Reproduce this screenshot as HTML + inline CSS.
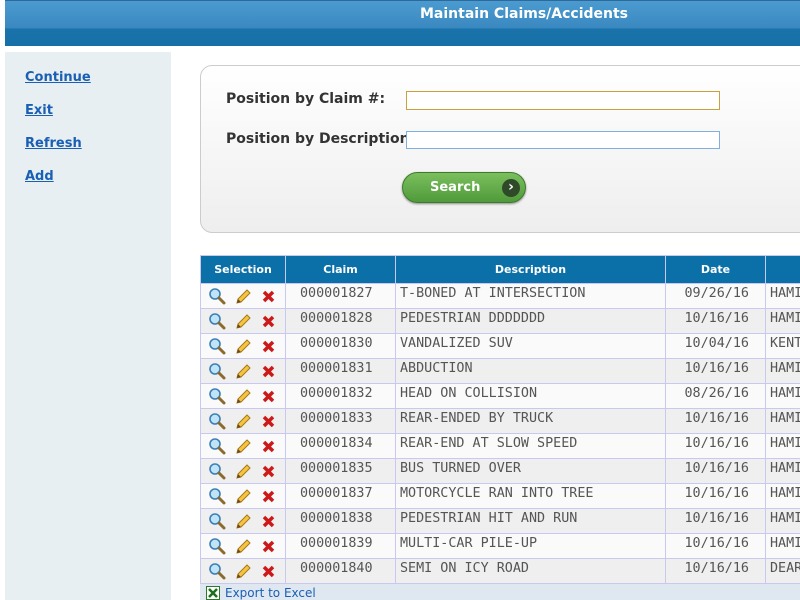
<!DOCTYPE html>
<html><head><meta charset="utf-8"><style>
*{margin:0;padding:0;box-sizing:border-box}
body{width:800px;height:600px;overflow:hidden;background:#fff;font-family:"DejaVu Sans","Liberation Sans",sans-serif;position:relative}
#hdr{position:absolute;left:5px;top:0;width:795px;height:46px;background:linear-gradient(#4b9bd0,#3a88c0 60%,#1a72aa 62%,#1670a8);border-top:1px solid #2d6a9a}
#hdr span{position:absolute;left:415px;top:5px;color:#fff;font-weight:bold;font-size:14px}
#side{position:absolute;left:5px;top:52px;width:166px;height:548px;background:#e7eff2}
#side a{position:absolute;left:20px;color:#1a5fb4;font-weight:bold;font-size:13px;text-decoration:underline}
#panel{position:absolute;left:200px;top:65px;width:620px;height:168px;border:1px solid #ccc;border-radius:12px;background:linear-gradient(#fff,#eee)}
.lbl{position:absolute;font-weight:bold;font-size:14px;color:#333}
.inp{position:absolute;left:205px;width:314px;height:19px;background:#fff}
#btn{position:absolute;left:201px;top:106px;width:124px;height:31px;border-radius:16px;background:linear-gradient(#7bbf5e,#4f9a3a);border:1px solid #3d7a2c;color:#fff;font-weight:bold;font-size:13px;box-shadow:0 1px 2px #888}
#btn span{position:absolute;left:27px;top:7px}
#btn i{position:absolute;right:5px;top:6px;width:18px;height:18px;border-radius:50%;background:#2e4a28;color:#fff;font-style:normal;font-size:14px;font-weight:bold;text-align:center;line-height:17px}
table{position:absolute;left:200px;top:255px;border-collapse:collapse;width:640px;table-layout:fixed}
th{background:#0b6fa8;color:#fff;font-size:11px;font-weight:bold;height:28px;border:1px solid #c8c8f0;padding:0}
tr.r{height:25px}
td{height:25px;border:1px solid #c8c8f0;font-family:"DejaVu Sans Mono","Liberation Mono",monospace;font-size:13.4px;line-height:14px;color:#555;padding:3px 4px 0;vertical-align:top;overflow:hidden;white-space:nowrap}
tr:nth-child(even) td{background:#efefef}
tr:nth-child(odd) td{background:#fafafa}
td.s{padding:3px 0 0 7px;line-height:0}
#exp{position:absolute;left:200px;top:584px;width:600px;height:16px;background:#dfe8f1;font-size:12px;color:#1a5fb4}
</style></head><body>
<div id="hdr"><span>Maintain Claims/Accidents</span></div>
<div id="side">
<a style="top:18px">Continue</a><a style="top:51px">Exit</a><a style="top:84px">Refresh</a><a style="top:117px">Add</a>
</div>
<div id="panel">
<div class="lbl" style="left:25px;top:25px">Position by Claim #:</div>
<div class="inp" style="top:25px;border:1px solid #c9a23e"></div>
<div class="lbl" style="left:25px;top:65px;width:180px;overflow:hidden;white-space:nowrap">Position by Description</div>
<div class="inp" style="top:65px;border:1px solid #7fb0de;height:18px"></div>
<div id="btn"><span>Search</span><i>›</i></div>
</div>
<table>
<tr><th style="width:85px">Selection</th><th style="width:110px">Claim</th><th style="width:270px">Description</th><th style="width:100px">Date</th><th></th></tr>
</table>
<div id="exp"><svg width="14" height="14" style="position:absolute;left:6px;top:2px"><rect x="0.5" y="0.5" width="13" height="13" fill="#fff" stroke="#2a7a2a"/><path d="M3 3l8 8M11 3l-8 8" stroke="#1e6e1e" stroke-width="2.5"/></svg><span style="position:absolute;left:25px;top:2px">Export to Excel</span></div>
<script>
var d=[["000001827","T-BONED AT INTERSECTION","09/26/16","HAMI"],["000001828","PEDESTRIAN DDDDDDD","10/16/16","HAMI"],["000001830","VANDALIZED SUV","10/04/16","KENT"],["000001831","ABDUCTION","10/16/16","HAMI"],["000001832","HEAD ON COLLISION","08/26/16","HAMI"],["000001833","REAR-ENDED BY TRUCK","10/16/16","HAMI"],["000001834","REAR-END AT SLOW SPEED","10/16/16","HAMI"],["000001835","BUS TURNED OVER","10/16/16","HAMI"],["000001837","MOTORCYCLE RAN INTO TREE","10/16/16","HAMI"],["000001838","PEDESTRIAN HIT AND RUN","10/16/16","HAMI"],["000001839","MULTI-CAR PILE-UP","10/16/16","HAMI"],["000001840","SEMI ON ICY ROAD","10/16/16","DEAR"]];
var ic='<svg width="70" height="18"><circle cx="7" cy="7" r="5" fill="#bfe3f7" stroke="#3d7fb5" stroke-width="1.6"/><path d="M11 11l5 5" stroke="#8a6a30" stroke-width="3" stroke-linecap="round"/><path d="M29 16l1-4 9-9 3 3-9 9z" fill="#f5c542" stroke="#a8781a"/><path d="M29 16l1-4 3 3z" fill="#6b4a20"/><path d="M56 5l9 9M65 5l-9 9" stroke="#cc1a1a" stroke-width="3.5"/></svg>';
var t=document.querySelector('table'),h='';
d.forEach(function(r){h+='<tr class="r"><td class="s">'+ic+'</td><td style="padding-left:14px">'+r[0]+'</td><td>'+r[1]+'</td><td style="text-align:right;padding-right:16px">'+r[2]+'</td><td>'+r[3]+'</td></tr>';});
t.insertAdjacentHTML('beforeend',h);
</script>
</body></html>
